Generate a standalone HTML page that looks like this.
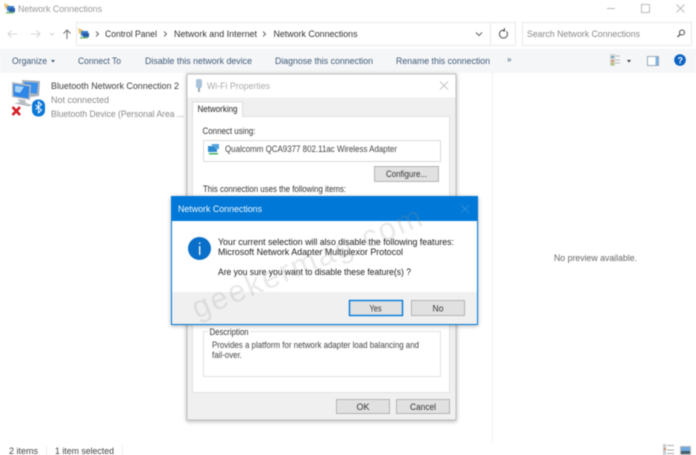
<!DOCTYPE html>
<html><head><meta charset="utf-8"><title>Network Connections</title>
<style>
html,body{margin:0;padding:0;background:#fff;width:696px;height:455px;overflow:hidden}
svg{display:block;filter:blur(.5px)}
text{font-family:"Liberation Sans",sans-serif;font-size:9px;fill:#444}
</style></head><body>
<svg width="696" height="455" viewBox="0 0 696 455" xmlns="http://www.w3.org/2000/svg">
<defs>
<filter id="sh" x="-10%" y="-10%" width="120%" height="120%"><feDropShadow dx="0" dy="1" stdDeviation="2" flood-color="#000" flood-opacity=".3"/></filter>
<g id="net"><path d="M0 0l5 2 1 4-5 0z" fill="#e9c672"/><rect x="3" y="3" width="7" height="5" fill="#3b7fcc"/><rect x="5" y="5" width="6" height="4" fill="#2a5ea8"/><path d="M2 9h8v1.500H2z" fill="#7dbb78"/></g>
</defs>
<rect width="696" height="455" fill="#fff"/>

<!-- title bar -->
<use href="#net" x="4" y="3"/>
<text x="18" y="12" style="fill:#999" textLength="84" lengthAdjust="spacingAndGlyphs">Network Connections</text>
<path d="M607 8.500h8" stroke="#bbb" fill="none"/>
<rect x="641.500" y="4.500" width="8" height="8" fill="none" stroke="#bbb"/>
<path d="M676.500 4.500l8 8M684.500 4.500l-8 8" stroke="#bbb" fill="none"/>

<!-- nav -->
<path d="M8 34h9M11.500 30.500L8 34l3.500 3.500" stroke="#d4d4d4" stroke-width="1" fill="none"/>
<path d="M31 34h9M36.500 30.500L40 34l-3.500 3.500" stroke="#d4d4d4" stroke-width="1" fill="none"/>
<path d="M50 33l2 2 2-2" stroke="#d4d4d4" fill="none"/>
<path d="M67 39v-9M63.500 33.500L67 30l3.500 3.500" stroke="#777" stroke-width="1.100" fill="none"/>
<rect x="76.500" y="22.500" width="439" height="23" fill="#fff" stroke="#e9e9e9"/>
<path d="M490.500 23v22" stroke="#e9e9e9"/>
<use href="#net" x="78" y="28"/>
<path d="M96 31.500l2.500 2.500-2.500 2.500" stroke="#666" fill="none"/>
<text x="105" y="37" style="fill:#333" textLength="52" lengthAdjust="spacingAndGlyphs">Control Panel</text>
<path d="M164 31.500l2.500 2.500-2.500 2.500" stroke="#666" fill="none"/>
<text x="174" y="37" style="fill:#333" textLength="83" lengthAdjust="spacingAndGlyphs">Network and Internet</text>
<path d="M263 31.500l2.500 2.500-2.500 2.500" stroke="#666" fill="none"/>
<text x="273.500" y="37" style="fill:#333" textLength="84" lengthAdjust="spacingAndGlyphs">Network Connections</text>
<path d="M476 32.500l3 3 3-3" stroke="#666" stroke-width="1.100" fill="none"/>
<path d="M506.300 31.300a4 4 0 1 1-2-1.100M504.500 28v3h-1.500" stroke="#555" stroke-width="1" fill="none"/>
<rect x="522.500" y="22.500" width="169" height="23" fill="#fff" stroke="#e9e9e9"/>
<text x="527" y="37" style="fill:#888" textLength="113" lengthAdjust="spacingAndGlyphs">Search Network Connections</text>
<circle cx="682" cy="32.500" r="2.500" fill="none" stroke="#555" stroke-width="1.100"/><path d="M680 34.500l-2.500 2.500" stroke="#555" stroke-width="1.300"/>

<!-- toolbar -->
<rect x="0" y="49" width="696" height="24" fill="#f5f6f7"/>
<text x="12" y="64" style="fill:#3f5a78" textLength="35" lengthAdjust="spacingAndGlyphs">Organize</text>
<path d="M51 60h4l-2 2.500z" fill="#3f5a78"/>
<text x="78" y="64" style="fill:#3f5a78" textLength="43" lengthAdjust="spacingAndGlyphs">Connect To</text>
<text x="145" y="64" style="fill:#3f5a78" textLength="107" lengthAdjust="spacingAndGlyphs">Disable this network device</text>
<text x="275" y="64" style="fill:#3f5a78" textLength="98" lengthAdjust="spacingAndGlyphs">Diagnose this connection</text>
<text x="396" y="64" style="fill:#3f5a78" textLength="94" lengthAdjust="spacingAndGlyphs">Rename this connection</text>
<text x="507" y="62" style="fill:#3f5a78;font-size:8px">»</text>
<rect x="610" y="54" width="5" height="12" fill="#d4dad4"/><rect x="611" y="56" width="3" height="2" fill="#6fa0c8"/><rect x="611" y="60" width="3" height="2" fill="#d89070"/><rect x="611" y="63" width="3" height="2" fill="#a0c060"/>
<path d="M615 56h5M615 60h5M615 63h5" stroke="#b5bcbc" fill="none"/>
<path d="M627 60h4l-2 2.500z" fill="#333"/>
<rect x="647.500" y="56.500" width="11" height="9" fill="#fff" stroke="#9ab"/><rect x="655.500" y="57" width="2.500" height="8" fill="#7eb2e2"/>
<circle cx="680" cy="60" r="5.800" fill="#0b62c4"/>
<text x="677.500" y="63.500" style="fill:#fff;font-size:9px;font-weight:bold">?</text>

<!-- pane divider -->
<path d="M492.500 73v370" stroke="#efefef"/>
<text x="554" y="261" style="fill:#666" textLength="83" lengthAdjust="spacingAndGlyphs">No preview available.</text>

<!-- item -->
<path d="M22 80l18 1-1 15-8 1-9-2z" fill="#aab2bc"/>
<path d="M24 82l14 .8-1 11-13-1.500z" fill="#3b90ea"/>
<path d="M12 82l19 3-1 15-18-3z" fill="#b0b8c2"/>
<path d="M13.500 84l16 2.500-1 12-15-2.500z" fill="#2f86e6"/>
<path d="M15 85.500l9 1.400-4 6-5-1z" fill="#a5d2f8"/>
<path d="M17 99l8 1 1 3 6 2-3 1.500-15-3 6-1.500z" fill="#b9bec4"/>
<path d="M12.500 107l7.500 8M20 107l-7.500 8" stroke="#d21f26" stroke-width="2.600" fill="none"/>
<rect x="32" y="99.500" width="13" height="17" rx="6" fill="#0c78d8"/>
<path d="M35.500 105l6 5-3 2.800v-11l3 2.700-6 5" stroke="#fff" stroke-width="1" fill="none"/>
<text x="51" y="89" style="fill:#3c3c3c" textLength="128" lengthAdjust="spacingAndGlyphs">Bluetooth Network Connection 2</text>
<text x="51" y="103" style="fill:#8a8a8a" textLength="58" lengthAdjust="spacingAndGlyphs">Not connected</text>
<text x="51" y="117" style="fill:#8a8a8a" textLength="133" lengthAdjust="spacingAndGlyphs">Bluetooth Device (Personal Area ...</text>

<!-- Wi-Fi dialog -->
<g filter="url(#sh)"><rect x="187" y="74" width="269" height="346" fill="#f0f0f0" stroke="#bdbdbd"/></g>
<rect x="187.500" y="74.500" width="268" height="23" fill="#fff"/>
<rect x="196" y="79" width="6" height="9" rx="2" fill="#a9c3dc"/><rect x="198" y="88" width="2" height="4" fill="#9aa"/>
<text x="207" y="89" style="fill:#aaa" textLength="63" lengthAdjust="spacingAndGlyphs">Wi-Fi Properties</text>
<path d="M440 81.500l8 8M448 81.500l-8 8" stroke="#c4c4c4" fill="none"/>
<rect x="192.500" y="116.500" width="257" height="276" fill="#fff" stroke="#e2e2e2"/>
<path d="M192.500 117v-15h50v15" fill="#fff" stroke="#dcdcdc"/>
<text x="197.500" y="112" style="fill:#222" textLength="40" lengthAdjust="spacingAndGlyphs">Networking</text>
<text x="202.500" y="134" style="fill:#333" textLength="53" lengthAdjust="spacingAndGlyphs">Connect using:</text>
<rect x="203.500" y="140.500" width="237" height="21" fill="#fff" stroke="#dadada"/>
<path d="M208 146h9v6h-9z" fill="#2f8bd0"/><path d="M211 144h8v5h-3z" fill="#55a5dd"/><path d="M209 153h9v1.500h-9z" fill="#3fb060"/>
<text x="225" y="152" style="fill:#444" textLength="172" lengthAdjust="spacingAndGlyphs">Qualcomm QCA9377 802.11ac Wireless Adapter</text>
<rect x="374.500" y="166.500" width="64" height="15" fill="#e1e1e1" stroke="#b3b3b3"/>
<text x="386" y="177" style="fill:#333" textLength="41" lengthAdjust="spacingAndGlyphs">Configure...</text>
<text x="203" y="192" style="fill:#333" textLength="143" lengthAdjust="spacingAndGlyphs">This connection uses the following items:</text>

<rect x="203.500" y="331.500" width="237" height="45" fill="#fff" stroke="#e2e2e2"/>
<rect x="208" y="328" width="42" height="6" fill="#fff"/>
<text x="209.500" y="335" style="fill:#333" textLength="39" lengthAdjust="spacingAndGlyphs">Description</text>
<text x="212" y="348" style="fill:#444" textLength="207" lengthAdjust="spacingAndGlyphs">Provides a platform for network adapter load balancing and</text>
<text x="212" y="358" style="fill:#444" textLength="30" lengthAdjust="spacingAndGlyphs">fail-over.</text>
<rect x="336.500" y="399.500" width="53" height="14" fill="#e1e1e1" stroke="#b3b3b3"/>
<text x="356.500" y="410" style="fill:#333" textLength="13" lengthAdjust="spacingAndGlyphs">OK</text>
<rect x="396.500" y="399.500" width="53" height="14" fill="#e1e1e1" stroke="#b3b3b3"/>
<text x="410" y="410" style="fill:#333" textLength="26" lengthAdjust="spacingAndGlyphs">Cancel</text>

<!-- confirm dialog -->
<g filter="url(#sh)"><rect x="171.500" y="196.500" width="306" height="128" fill="#fff" stroke="#0078d7"/></g>
<rect x="172" y="197" width="305" height="24" fill="#0078d7"/>
<text x="178" y="212" style="fill:#f2f8fd" textLength="84" lengthAdjust="spacingAndGlyphs">Network Connections</text>
<path d="M461 205l8 8M469 205l-8 8" stroke="#2b8fde" fill="none"/>
<rect x="172" y="292" width="305" height="32" fill="#f0f0f0"/>
<circle cx="199.500" cy="248.500" r="11.500" fill="#0a6fc9"/>
<rect x="199" y="246" width="1.300" height="9" fill="#fff"/><rect x="199" y="242.500" width="1.300" height="1.500" fill="#fff"/>
<text x="218" y="245" style="fill:#222" textLength="236" lengthAdjust="spacingAndGlyphs">Your current selection will also disable the following features:</text>
<text x="218" y="255" style="fill:#222" textLength="185" lengthAdjust="spacingAndGlyphs">Microsoft Network Adapter Multiplexor Protocol</text>
<text x="218" y="275" style="fill:#222" textLength="193" lengthAdjust="spacingAndGlyphs">Are you sure you want to disable these feature(s) ?</text>
<rect x="349.500" y="300.500" width="53" height="15" fill="#e1e1e1" stroke="#0078d7" stroke-width="1.400"/>
<text x="369.500" y="311.500" style="fill:#333" textLength="12" lengthAdjust="spacingAndGlyphs">Yes</text>
<rect x="411.500" y="300.500" width="53" height="15" fill="#e1e1e1" stroke="#b3b3b3"/>
<text x="432.500" y="311.500" style="fill:#333" textLength="11" lengthAdjust="spacingAndGlyphs">No</text>

<!-- watermark -->
<text x="197" y="319" transform="rotate(-22.500 197 319)" style="font-size:31px;fill:#8f8f8f;fill-opacity:.2" textLength="246" lengthAdjust="spacing">geekermag.com</text>

<!-- status bar -->
<text x="9" y="454" style="fill:#444" textLength="29" lengthAdjust="spacingAndGlyphs">2 items</text>
<path d="M46.500 446v9M122.500 446v9" stroke="#eee"/>
<text x="55" y="454" style="fill:#444" textLength="59" lengthAdjust="spacingAndGlyphs">1 item selected</text>
<rect x="663" y="444" width="3" height="11" fill="#c5ccd4"/><rect x="664" y="448" width="2" height="2" fill="#d08a60"/>
<path d="M667 445.500h7M667 450h7M667 453.500h7" stroke="#aaa" fill="none"/>
<rect x="680.500" y="446.500" width="10" height="8" fill="#6fa8e0" stroke="#bbb"/><rect x="681" y="451" width="9" height="3" fill="#44606a"/>
</svg>
</body></html>
